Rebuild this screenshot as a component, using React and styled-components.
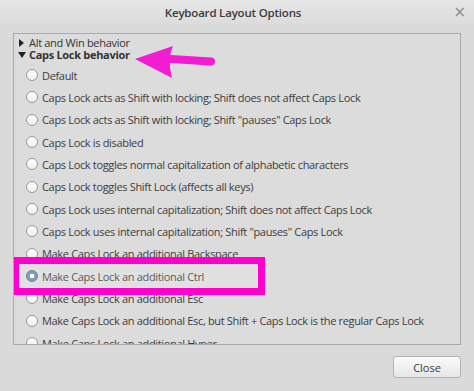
import React from 'react';
import styled, { createGlobalStyle } from 'styled-components';

const Global = createGlobalStyle`
  html, body {
    margin: 0;
    padding: 0;
    background: #dadada;
  }
  body {
    font-family: "Open Sans", "DejaVu Sans", sans-serif;
    color: #3c3c3c;
  }
`;

const options = [
  'Default',
  'Caps Lock acts as Shift with locking; Shift does not affect Caps Lock',
  'Caps Lock acts as Shift with locking; Shift "pauses" Caps Lock',
  'Caps Lock is disabled',
  'Caps Lock toggles normal capitalization of alphabetic characters',
  'Caps Lock toggles Shift Lock (affects all keys)',
  'Caps Lock uses internal capitalization; Shift does not affect Caps Lock',
  'Caps Lock uses internal capitalization; Shift "pauses" Caps Lock',
  'Make Caps Lock an additional Backspace',
  'Make Caps Lock an additional Ctrl',
  'Make Caps Lock an additional Esc',
  'Make Caps Lock an additional Esc, but Shift + Caps Lock is the regular Caps Lock',
  'Make Caps Lock an additional Hyper',
];

const App = () => {
  return (
    <Window>
      <Global />
      <TitleBar>
        <Title>Keyboard Layout Options</Title>
        <CloseX>×</CloseX>
      </TitleBar>
      <Body>
        <Panel>
          <Header>
            <Triangle open={false} />
            Alt and Win behavior
          </Header>
          <Header bold>
            <Triangle open />
            Caps Lock behavior
          </Header>
          <List>
            {options.map((o, i) => (
              <Row key={i}>
                <Radio checked={i === 9} />
                <span>{o}</span>
              </Row>
            ))}
          </List>
          <Highlight />
          <Arrow width="80" height="40" viewBox="0 0 80 40">
            <path d="M36 14 L76 16.5" stroke="#f21cd2" strokeWidth="8" strokeLinecap="round" fill="none" />
            <path d="M0 14 L38 1 Q32 14 37 33 Z" fill="#f21cd2" />
          </Arrow>
        </Panel>
        <Footer>
          <Button>Close</Button>
        </Footer>
      </Body>
    </Window>
  );
};

const Window = styled.div`
  width: 474px;
  height: 391px;
  background: #dadada;
  overflow: hidden;
`;

const TitleBar = styled.div`
  height: 24px;
  display: flex;
  align-items: center;
  justify-content: center;
  position: relative;
  background: linear-gradient(#e6e6e6, #dcdcdc);
`;

const Title = styled.div`
  font-size: 11.5px;
  font-weight: 600;
  letter-spacing: -0.2px;
  color: #3c3c3c;
  margin-right: 8px;
`;

const CloseX = styled.div`
  position: absolute;
  right: 8px;
  top: 3px;
  font-size: 15px;
  color: #8a8a8a;
  font-family: "DejaVu Sans", sans-serif;
`;

const Body = styled.div`
  padding: 9px 13px 0 13px;
`;

const Panel = styled.div`
  position: relative;
  border: 1px solid #a9a9a9;
  background: #dcdcdc;
  overflow: hidden;
  padding-top: 3px;
  box-sizing: border-box;
  height: 312px;
`;

const Header = styled.div`
  height: 12px;
  line-height: 12px;
  display: flex;
  align-items: center;
  gap: 3px;
  padding-left: 4px;
  font-size: 11px;
  letter-spacing: -0.3px;
  font-weight: ${p => (p.bold ? 700 : 400)};
  color: #333;
`;

const Triangle = styled.span`
  width: 0;
  height: 0;
  ${p => p.open
    ? `border-left: 4px solid transparent; border-right: 4px solid transparent; border-top: 6px solid #222;`
    : `border-top: 4px solid transparent; border-bottom: 4px solid transparent; border-left: 5px solid #222; margin: 0 2px 0 1px;`}
`;

const List = styled.div`
  margin-top: 3px;
  display: flex;
  flex-direction: column;
`;

const Row = styled.div`
  height: 22.33px;
  display: flex;
  align-items: center;
  gap: 4px;
  padding-left: 12px;
  font-size: 11px;
  letter-spacing: -0.33px;
  white-space: nowrap;
  color: #3c3c3c;
`;

const Radio = styled.span`
  width: 12px;
  height: 12px;
  border-radius: 50%;
  box-sizing: border-box;
  flex-shrink: 0;
  border: 1px solid ${p => (p.checked ? '#4d6d88' : '#9a9a9a')};
  background: ${p => (p.checked ? 'radial-gradient(circle, #fff 0 2px, #6b8eac 2.5px)' : 'linear-gradient(#ffffff, #eeeeee)')};
`;

const Highlight = styled.div`
  position: absolute;
  left: -2px;
  top: 223px;
  width: 253px;
  height: 38px;
  box-sizing: border-box;
  border: 7px solid #ff00cc;
  background: rgba(255, 255, 255, 0.15);
`;

const Arrow = styled.svg`
  position: absolute;
  left: 121px;
  top: 11px;
`;

const Footer = styled.div`
  display: flex;
  justify-content: flex-end;
  padding-top: 11px;
`;

const Button = styled.button`
  width: 68px;
  height: 22px;
  border: 1px solid #b3b3b3;
  border-radius: 3px;
  background: linear-gradient(#fbfbfb, #e6e6e6);
  font-family: "Open Sans", "DejaVu Sans", sans-serif;
  font-size: 11px;
  color: #3c3c3c;
  padding: 0;
`;

export default App;
